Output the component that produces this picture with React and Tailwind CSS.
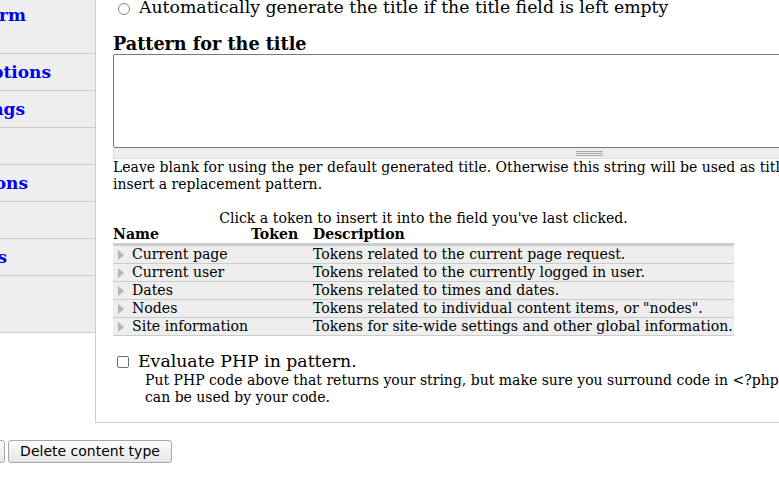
export default function App() {
  const tabs = [
    { t: "Submission form", w: "w-[26px]", h: "h-[54px]", pt: "pt-[5px]" },
    { t: "Publishing options", w: "w-[51px]", h: "h-[37px]", pt: "pt-[8px]" },
    { t: "Display settings", w: "w-[25px]", h: "h-[37px]", pt: "pt-[8px]" },
    { t: "Comment", w: "w-0 -ml-[6px]", h: "h-[37px]", pt: "pt-[8px]" },
    { t: "Menu options", w: "w-[28px]", h: "h-[37px]", pt: "pt-[8px]" },
    { t: "Menu", w: "w-0 -ml-[6px]", h: "h-[37px]", pt: "pt-[8px]" },
    { t: "Automatic titles", w: "w-[7px]", h: "h-[37px]", pt: "pt-[8px]" },
  ];
  const rows = [
    ["Current page", "Tokens related to the current page request."],
    ["Current user", "Tokens related to the currently logged in user."],
    ["Dates", "Tokens related to times and dates."],
    ["Nodes", 'Tokens related to individual content items, or "nodes".'],
    ["Site information", "Tokens for site-wide settings and other global information."],
  ];
  return (
    <div className="w-[779px] h-[492px] overflow-hidden bg-white text-black font-['DejaVu_Serif',serif]">
      <div className="flex items-start">
        <div className="w-[95px] shrink-0 h-[333px] bg-[#eeeeee] border-b border-[#cccccc] overflow-hidden flex flex-col">
          {tabs.map((tab, i) => (
            <div key={i} className={`${tab.h} ${tab.pt} border-b border-[#cccccc] shrink-0`}>
              <div className={`${tab.w} flex justify-end`}>
                <span className="whitespace-nowrap font-bold text-[17px] leading-[20px] text-[#0000ee]">{tab.t}</span>
              </div>
            </div>
          ))}
        </div>
        <div className="w-[1100px] shrink-0 h-[423px] border-l border-b border-[#cccccc] pl-[17px]">
          <div className="flex items-center h-[17px] mt-[-1px]">
            <span className="ml-[5px] w-[12px] h-[12px] rounded-full border border-[#8a8a8a] bg-white mt-[3px]"></span>
            <span className="ml-[9px] text-[17.3px] leading-[19px]">Automatically generate the title if the title field is left empty</span>
          </div>
          <div className="mt-[17px] font-bold text-[17.6px] leading-[21px]">Pattern for the title</div>
          <div className="w-[952px] h-[94px] border border-[#7a7a7a] rounded-[2px] bg-white"></div>
          <div className="w-[952px] h-[11px] bg-[#eeeeee] border border-[#dddddd] border-t-0 flex justify-center items-center">
            <div className="w-[27px] flex flex-col gap-[1px]">
              <div className="h-px bg-[#aaaaaa]"></div>
              <div className="h-px bg-[#aaaaaa]"></div>
              <div className="h-px bg-[#aaaaaa]"></div>
            </div>
          </div>
          <div className="text-[14px] leading-[17px] whitespace-nowrap">
            <div>Leave blank for using the per default generated title. Otherwise this string will be used as title. Use the syntax [token] if you want to</div>
            <div>insert a replacement pattern.</div>
          </div>
          <div className="w-[621px] mt-[17px] text-[14.1px] leading-[17px]">
            <div className="h-[16px] text-center">Click a token to insert it into the field you've last clicked.</div>
            <div className="flex h-[20px] border-b-[3px] border-[#cccccc] font-bold">
              <div className="w-[138px]">Name</div>
              <div className="w-[62px]">Token</div>
              <div>Description</div>
            </div>
            {rows.map((r, i) => (
              <div key={i} className="flex items-center h-[18px] bg-[#eeeeee] border-b border-[#cccccc] whitespace-nowrap">
                <div className="w-[200px] flex items-center">
                  <svg width="7" height="10" viewBox="0 0 7 10" className="ml-[5px] mr-[7px] shrink-0">
                    <polygon points="0,0 6,5 0,10" fill="#b5b5b5" />
                  </svg>
                  <span>{r[0]}</span>
                </div>
                <div>{r[1]}</div>
              </div>
            ))}
          </div>
          <div className="mt-[15px] flex items-center">
            <span className="ml-[4px] w-[12px] h-[12px] rounded-[2px] border border-[#6f6f6f] bg-white"></span>
            <span className="ml-[9px] text-[17.3px] leading-[21px]">Evaluate PHP in pattern.</span>
          </div>
          <div className="pl-[32px] text-[14px] leading-[17px] whitespace-nowrap">
            <div>Put PHP code above that returns your string, but make sure you surround code in &lt;?php and ?&gt;. Note that $node is available and</div>
            <div>can be used by your code.</div>
          </div>
        </div>
      </div>
      <div className="mt-[17px] flex gap-[3px] ml-[-60px] font-['DejaVu_Sans',sans-serif] text-[14px]">
        <button className="h-[23px] w-[65px] border border-[#a8a8a8] rounded-[3px] bg-gradient-to-b from-[#fdfdfd] to-[#e6e6e6] text-black">Save</button>
        <button className="h-[23px] w-[164px] border border-[#a8a8a8] rounded-[3px] bg-gradient-to-b from-[#fdfdfd] to-[#e6e6e6] text-black">Delete content type</button>
      </div>
    </div>
  );
}
